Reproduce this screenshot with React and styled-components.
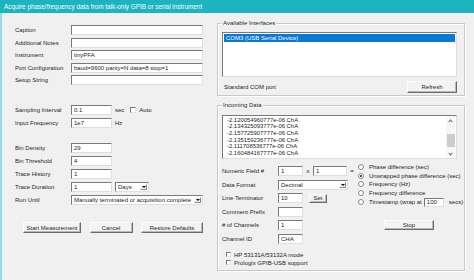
import styled, { createGlobalStyle } from "styled-components";

const GlobalStyle = createGlobalStyle`
  html, body {
    margin: 0;
    padding: 0;
    background: #f0f0f0;
  }
  body {
    font-family: "Liberation Sans", Arial, sans-serif;
  }
`;

const Window = styled.div`
  width: 474px;
  height: 280px;
  display: flex;
  flex-direction: column;
  background: #f0f0f0;
  font-size: 6px;
  color: #1e1e1e;
  overflow: hidden;
`;

const TitleBar = styled.div`
  height: 13px;
  flex-shrink: 0;
  display: flex;
  align-items: center;
  padding-left: 4px;
  background: #1db4c0;
  color: #f4fcfd;
  font-size: 6.4px;
`;

const Body = styled.div`
  flex: 1;
  display: flex;
  border-left: 2px solid #93dce3;
`;

const LeftPane = styled.div`
  width: 215px;
  flex-shrink: 0;
  box-sizing: border-box;
  padding: 12px 0 0 13px;
  display: flex;
  flex-direction: column;
`;

const Section = styled.div`
  display: flex;
  flex-direction: column;
  gap: ${(p) => p.$gap ?? 3}px;
  margin-top: ${(p) => p.$mt ?? 0}px;
`;

const Row = styled.div`
  display: flex;
  align-items: center;
  height: ${(p) => p.$h ?? 10}px;
  flex-shrink: 0;
`;

const Label = styled.span`
  width: ${(p) => p.$w ?? 56}px;
  flex-shrink: 0;
  white-space: nowrap;
`;

const Text = styled.span`
  white-space: nowrap;
  margin-left: ${(p) => p.$ml ?? 0}px;
`;

const Sign = styled.span`
  width: ${(p) => p.$w ?? 10}px;
  text-align: center;
  flex-shrink: 0;
`;

const TextBox = styled.input`
  width: ${(p) => p.$w}px;
  height: ${(p) => p.$h ?? 10}px;
  box-sizing: border-box;
  margin: 0 0 0 ${(p) => p.$ml ?? 0}px;
  padding: 0 2px;
  border: 1px solid;
  border-color: #7a7a7a #dedede #dedede #7a7a7a;
  background: #fff;
  font: inherit;
  color: #1e1e1e;
  outline: none;
  flex-shrink: 0;
`;

const Combo = styled.div`
  width: ${(p) => p.$w}px;
  height: 10px;
  box-sizing: border-box;
  margin-left: ${(p) => p.$ml ?? 0}px;
  display: flex;
  align-items: center;
  padding: 0 1px 0 2px;
  border: 1px solid;
  border-color: #7a7a7a #dedede #dedede #7a7a7a;
  background: #fff;
  flex-shrink: 0;
  span {
    flex: 1;
    white-space: nowrap;
    overflow: hidden;
  }
`;

const ArrowBox = styled.i`
  width: 7px;
  height: 6px;
  box-sizing: border-box;
  display: flex;
  align-items: center;
  justify-content: center;
  border: 1px solid;
  border-color: #fff #8a8a8a #8a8a8a #fff;
  background: #ececec;
  &::after {
    content: "";
    border-left: 2px solid transparent;
    border-right: 2px solid transparent;
    border-top: 2px solid #111;
  }
`;

const Button = styled.button`
  width: ${(p) => p.$w}px;
  height: ${(p) => p.$h ?? 11}px;
  margin: 0 0 0 ${(p) => p.$ml ?? 0}px;
  padding: 0;
  box-sizing: border-box;
  border: 1px solid;
  border-color: #fcfcfc #6b6b6b #6b6b6b #fcfcfc;
  box-shadow: inset -1px -1px 0 #b8b8b8;
  background: #f3f3f3;
  font: inherit;
  color: #1e1e1e;
  flex-shrink: 0;
`;

const ButtonRow = styled.div`
  display: flex;
  align-items: center;
  margin-top: 17px;
  padding-left: 8px;
  gap: 8.5px;
`;

const CheckBox = styled.span`
  width: ${(p) => p.$s ?? 6}px;
  height: ${(p) => p.$s ?? 6}px;
  box-sizing: border-box;
  margin-left: ${(p) => p.$ml ?? 0}px;
  margin-right: ${(p) => p.$mr ?? 3}px;
  border: 1px solid;
  border-color: #7a7a7a #e6e6e6 #e6e6e6 #7a7a7a;
  background: #fff;
  flex-shrink: 0;
`;

const RightPane = styled.div`
  width: 248px;
  flex-shrink: 0;
  padding-top: 6px;
  display: flex;
  flex-direction: column;
  gap: 5px;
`;

const Group = styled.fieldset`
  margin: 0;
  padding: ${(p) => p.$pt ?? 5}px 7px ${(p) => p.$pb ?? 2}px 4px;
  border: 1px solid #c9c9c9;
  box-shadow: inset 1px 1px 0 #fff, 1px 1px 0 #fff;
  min-width: 0;
`;

const Legend = styled.legend`
  padding: 0 1px;
  line-height: 8px;
  font-size: 6px;
`;

const ListBox = styled.div`
  height: 45px;
  box-sizing: border-box;
  padding: 1px;
  border: 1px solid;
  border-color: #7a7a7a #dedede #dedede #7a7a7a;
  background: #fff;
`;

const ListItem = styled.div`
  height: 8px;
  line-height: 8px;
  padding-left: 2px;
  background: ${(p) => (p.$selected ? "#0a78d6" : "transparent")};
  color: ${(p) => (p.$selected ? "#fff" : "#1e1e1e")};
`;

const PortRow = styled.div`
  display: flex;
  align-items: center;
  justify-content: space-between;
  margin-top: 4px;
  padding-left: 2px;
`;

const DataBox = styled.div`
  height: 44px;
  box-sizing: border-box;
  display: flex;
  border: 1px solid;
  border-color: #7a7a7a #dedede #dedede #7a7a7a;
  background: #fff;
`;

const DataLines = styled.div`
  flex: 1;
  padding: 0.5px 0 0 4px;
  line-height: 6.67px;
  font-size: 5.9px;
  white-space: pre;
`;

const ScrollBar = styled.div`
  width: 9px;
  margin-right: 1px;
  display: flex;
  flex-direction: column;
  align-items: center;
  background: #f7f7f7;
`;

const ScrollArrow = styled.div`
  height: 8px;
  width: 9px;
  display: flex;
  align-items: center;
  justify-content: center;
  &::after {
    content: "";
    width: 2px;
    height: 2px;
    border-left: 1px solid #666;
    border-top: 1px solid #666;
    transform: rotate(${(p) => (p.$down ? "225deg" : "45deg")});
    margin-top: ${(p) => (p.$down ? "-1px" : "2px")};
  }
`;

const Track = styled.div`
  flex: 1;
  width: 9px;
  display: flex;
  flex-direction: column;
  justify-content: flex-end;
  padding-bottom: 3px;
  box-sizing: border-box;
`;

const Thumb = styled.div`
  height: 13px;
  width: 8px;
  margin-left: 0.5px;
  background: #cdcdcd;
`;

const FormArea = styled.div`
  display: flex;
  margin-top: 7px;
`;

const FormCol = styled.div`
  width: 135px;
  flex-shrink: 0;
  display: flex;
  flex-direction: column;
  gap: 3.6px;
`;

const OptionCol = styled.div`
  display: flex;
  flex-direction: column;
  margin-top: -3px;
`;

const Radio = styled.span`
  width: 6px;
  height: 6px;
  box-sizing: border-box;
  margin: 0 5px 0 1px;
  border-radius: 50%;
  border: 1px solid #8a8a8a;
  background: #fff;
  flex-shrink: 0;
  display: flex;
  align-items: center;
  justify-content: center;
  &::after {
    content: "";
    display: ${(p) => (p.$on ? "block" : "none")};
    width: 2px;
    height: 2px;
    border-radius: 50%;
    background: #222;
  }
`;

const CheckList = styled.div`
  display: flex;
  flex-direction: column;
  margin-top: 7px;
  padding-left: 4px;
`;

const samples = [
  "-2.120054960777e-06 ChA",
  "-2.134325093777e-06 ChA",
  "-2.157725907777e-06 ChA",
  "-2.135159236777e-06 ChA",
  "-2.111708536777e-06 ChA",
  "-2.160484167777e-06 ChA",
];

const options = [
  { label: "Phase difference (sec)" },
  { label: "Unwrapped phase difference (sec)", on: true },
  { label: "Frequency (Hz)" },
  { label: "Frequency difference" },
];

const topFields = [
  ["Caption", ""],
  ["Additional Notes", ""],
  ["Instrument", "tinyPFA"],
  ["Port Configuration", "baud=9600 parity=N data=8 stop=1"],
  ["Setup String", ""],
];

export default function App() {
  return (
    <>
      <GlobalStyle />
      <Window>
        <TitleBar>Acquire phase/frequency data from talk-only GPIB or serial instrument</TitleBar>
        <Body>
          <LeftPane>
            <Section $gap={2.5}>
              {topFields.map(([label, value]) => (
                <Row key={label}>
                  <Label>{label}</Label>
                  <TextBox $w={132} defaultValue={value} readOnly />
                </Row>
              ))}
            </Section>

            <Section $mt={20}>
              <Row>
                <Label>Sampling Interval</Label>
                <TextBox $w={41} defaultValue="0.1" readOnly />
                <Text $ml={3}>sec</Text>
                <CheckBox $ml={6} />
                <Text>Auto</Text>
              </Row>
              <Row>
                <Label>Input Frequency</Label>
                <TextBox $w={41} defaultValue="1e7" readOnly />
                <Text $ml={3}>Hz</Text>
              </Row>
            </Section>

            <Section $mt={15}>
              <Row>
                <Label>Bin Density</Label>
                <TextBox $w={41} defaultValue="29" readOnly />
              </Row>
              <Row>
                <Label>Bin Threshold</Label>
                <TextBox $w={41} defaultValue="4" readOnly />
              </Row>
              <Row>
                <Label>Trace History</Label>
                <TextBox $w={41} defaultValue="1" readOnly />
              </Row>
              <Row>
                <Label>Trace Duration</Label>
                <TextBox $w={41} defaultValue="1" readOnly />
                <Combo $w={34} $ml={3}>
                  <span>Days</span>
                  <ArrowBox />
                </Combo>
              </Row>
              <Row>
                <Label>Run Until</Label>
                <Combo $w={132}>
                  <span>Manually terminated or acquisition complete</span>
                  <ArrowBox />
                </Combo>
              </Row>
            </Section>

            <ButtonRow>
              <Button $w={58}>Start Measurement</Button>
              <Button $w={43}>Cancel</Button>
              <Button $w={62}>Restore Defaults</Button>
            </ButtonRow>
          </LeftPane>

          <RightPane>
            <Group $pt={5} $pb={2}>
              <Legend>Available Interfaces</Legend>
              <ListBox>
                <ListItem $selected>COM3 (USB Serial Device)</ListItem>
              </ListBox>
              <PortRow>
                <span>Standard COM port</span>
                <Button $w={50} $h={12}>Refresh</Button>
              </PortRow>
            </Group>

            <Group $pt={6} $pb={3}>
              <Legend>Incoming Data</Legend>
              <DataBox>
                <DataLines>{samples.join("\n")}</DataLines>
                <ScrollBar>
                  <ScrollArrow />
                  <Track>
                    <Thumb />
                  </Track>
                  <ScrollArrow $down />
                </ScrollBar>
              </DataBox>

              <FormArea>
                <FormCol>
                  <Row>
                    <Label>Numeric Field #</Label>
                    <TextBox $w={25} defaultValue="1" readOnly />
                    <Sign>x</Sign>
                    <TextBox $w={34} defaultValue="1" readOnly />
                    <Sign>=</Sign>
                  </Row>
                  <Row>
                    <Label>Data Format</Label>
                    <Combo $w={70}>
                      <span>Decimal</span>
                      <ArrowBox />
                    </Combo>
                  </Row>
                  <Row>
                    <Label>Line Terminator</Label>
                    <TextBox $w={25} defaultValue="10" readOnly />
                    <Button $w={18} $h={9} $ml={6}>Set</Button>
                  </Row>
                  <Row>
                    <Label>Comment Prefix</Label>
                    <TextBox $w={25} defaultValue="" readOnly />
                  </Row>
                  <Row>
                    <Label># of Channels</Label>
                    <TextBox $w={25} defaultValue="1" readOnly />
                  </Row>
                  <Row>
                    <Label>Channel ID</Label>
                    <TextBox $w={25} defaultValue="CHA" readOnly />
                  </Row>
                </FormCol>

                <OptionCol>
                  {options.map((o) => (
                    <Row key={o.label} $h={8.6}>
                      <Radio $on={o.on} />
                      <Text>{o.label}</Text>
                    </Row>
                  ))}
                  <Row>
                    <Radio />
                    <Text>Timestamp (wrap at</Text>
                    <TextBox $w={20} $h={9} $ml={2} defaultValue="100" readOnly />
                    <Text $ml={5}>secs)</Text>
                  </Row>
                  <Button $w={50} $h={10} $ml={27} style={{ marginTop: 13 }}>
                    Stop
                  </Button>
                </OptionCol>
              </FormArea>

              <CheckList>
                <Row $h={8}>
                  <CheckBox $s={5} />
                  <Text>HP 53131A/53132A mode</Text>
                </Row>
                <Row $h={8}>
                  <CheckBox $s={5} />
                  <Text>Prologix GPIB-USB support</Text>
                </Row>
              </CheckList>
            </Group>
          </RightPane>
        </Body>
      </Window>
    </>
  );
}
